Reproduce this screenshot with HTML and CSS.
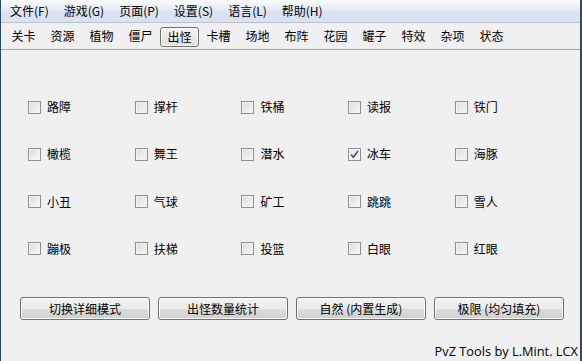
FILE: index.html
```html
<!DOCTYPE html>
<html lang="zh">
<head>
<meta charset="utf-8">
<link rel="stylesheet" href="styles.css">
</head>
<body>
<div class="window">
  <div class="menubar">
    <span class="menu">文件(F)</span>
    <span class="menu">游戏(G)</span>
    <span class="menu">页面(P)</span>
    <span class="menu">设置(S)</span>
    <span class="menu">语言(L)</span>
    <span class="menu">帮助(H)</span>
  </div>
  <div class="tabs">
    <span class="tab">关卡</span>
    <span class="tab">资源</span>
    <span class="tab">植物</span>
    <span class="tab">僵尸</span>
    <span class="tab active">出怪</span>
    <span class="tab">卡槽</span>
    <span class="tab">场地</span>
    <span class="tab">布阵</span>
    <span class="tab">花园</span>
    <span class="tab">罐子</span>
    <span class="tab">特效</span>
    <span class="tab">杂项</span>
    <span class="tab">状态</span>
  </div>
  <div class="content">
    <div class="grid">
      <label class="cb"><span class="box"></span>路障</label>
      <label class="cb"><span class="box"></span>撑杆</label>
      <label class="cb"><span class="box"></span>铁桶</label>
      <label class="cb"><span class="box"></span>读报</label>
      <label class="cb"><span class="box"></span>铁门</label>
      <label class="cb"><span class="box"></span>橄榄</label>
      <label class="cb"><span class="box"></span>舞王</label>
      <label class="cb"><span class="box"></span>潜水</label>
      <label class="cb"><span class="box checked"><svg viewBox="0 0 9 9" width="9" height="9"><path d="M1 4.5 L3.3 7.2 L8 1" fill="none" stroke="#3a4f8c" stroke-width="1.6"/></svg></span>冰车</label>
      <label class="cb"><span class="box"></span>海豚</label>
      <label class="cb"><span class="box"></span>小丑</label>
      <label class="cb"><span class="box"></span>气球</label>
      <label class="cb"><span class="box"></span>矿工</label>
      <label class="cb"><span class="box"></span>跳跳</label>
      <label class="cb"><span class="box"></span>雪人</label>
      <label class="cb"><span class="box"></span>蹦极</label>
      <label class="cb"><span class="box"></span>扶梯</label>
      <label class="cb"><span class="box"></span>投篮</label>
      <label class="cb"><span class="box"></span>白眼</label>
      <label class="cb"><span class="box"></span>红眼</label>
    </div>
    <div class="buttons">
      <button class="btn">切换详细模式</button>
      <button class="btn">出怪数量统计</button>
      <button class="btn">自然 (内置生成)</button>
      <button class="btn">极限 (均匀填充)</button>
    </div>
    <div class="footer">PvZ Tools by L.Mint. LCX</div>
  </div>
</div>
</body>
</html>
```
FILE: styles.css
```css
html, body {
  margin: 0;
  padding: 0;
  width: 582px;
  height: 361px;
  overflow: hidden;
  background: #f0f0f0;
}
.window {
  box-sizing: border-box;
  width: 582px;
  height: 361px;
  border-left: 1px solid #2c4a68;
  border-right: 2px solid #2c4a68;
  background: #f0f0f0;
  font-family: "Noto Sans CJK SC", "Liberation Sans", sans-serif;
  font-size: 12px;
  color: #000;
  display: flex;
  flex-direction: column;
}
.menubar {
  height: 23px;
  box-sizing: border-box;
  border-bottom: 1px solid #b9c0d0;
  background: linear-gradient(#fbfcfe 0%, #e9edf7 35%, #d9e0f1 60%, #dbe2f1 100%);
  display: flex;
  align-items: center;
  padding-left: 2px;
  line-height: 16px;
}
.menu {
  padding: 0 7px;
  margin-right: 1px;
}
.tabs {
  height: 27px;
  box-sizing: border-box;
  border-bottom: 1px solid #a8a8a8;
  display: flex;
  align-items: center;
  padding-left: 3px;
  line-height: 16px;
}
.tab {
  width: 39px;
  text-align: center;
  box-sizing: border-box;
}
.tab.active {
  margin-top: 1px;
  height: 20px;
  line-height: 18px;
  border: 1px solid #707070;
  border-radius: 3px;
  background: linear-gradient(#f2f2f2, #e0e0e0);
  box-shadow: inset 0 0 0 1px #fcfcfc;
}
.content {
  flex: 1;
  display: flex;
  flex-direction: column;
}
.grid {
  display: grid;
  grid-template-columns: repeat(5, 106.7px);
  grid-auto-rows: 47.3px;
  padding-left: 27px;
  padding-top: 50px;
}
.cb {
  display: flex;
  align-items: center;
  height: 14px;
  line-height: 14px;
}
.box {
  width: 11px;
  height: 11px;
  border: 1px solid #8f8f8f;
  background: linear-gradient(135deg, #dcdcdc, #f8f8f8);
  box-shadow: inset 0 0 0 1px #f4f4f4;
  margin-right: 6px;
  display: flex;
  align-items: center;
  justify-content: center;
}
.box.checked {
  background: linear-gradient(135deg, #e4e4e4, #fafafa);
}
.buttons {
  display: flex;
  gap: 8px;
  padding-left: 19px;
  margin-top: 8px;
}
.btn {
  width: 130px;
  height: 23px;
  box-sizing: border-box;
  border: 1px solid #707070;
  border-radius: 3px;
  background: linear-gradient(#f2f2f2 0%, #ebebeb 50%, #dddddd 51%, #cfcfcf 100%);
  box-shadow: inset 0 0 0 1px #fcfcfc;
  font-family: "Noto Sans CJK SC", "Liberation Sans", sans-serif;
  font-size: 12px;
  line-height: 16px;
  color: #000;
  padding: 0;
}
.footer {
  margin-top: auto;
  text-align: right;
  padding-right: 2px;
  padding-bottom: 1px;
  line-height: 17px;
  font-family: "Open Sans", "Noto Sans CJK SC", sans-serif;
  font-size: 12.8px;
}
```
